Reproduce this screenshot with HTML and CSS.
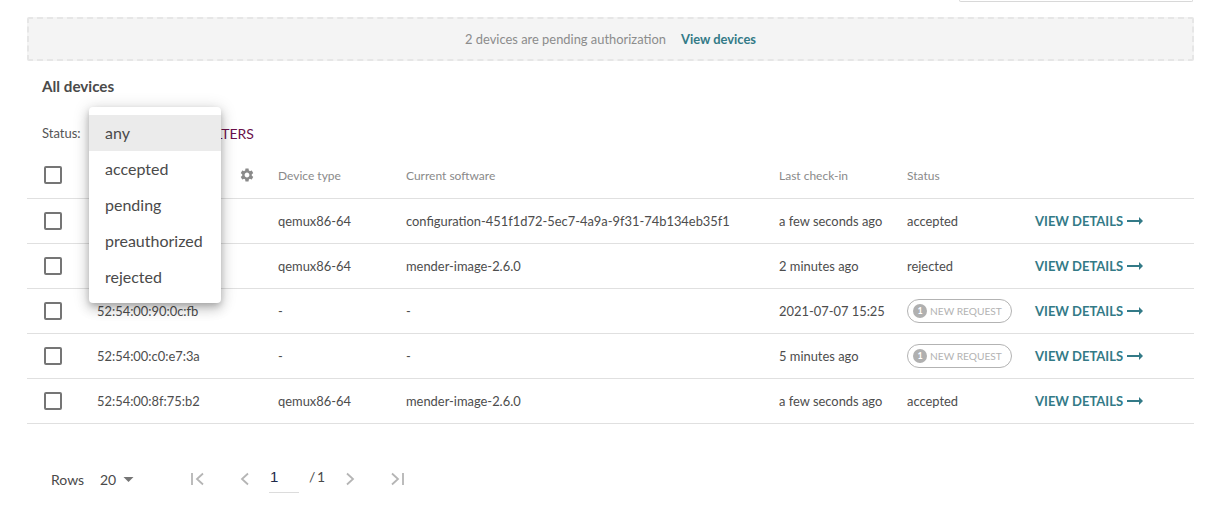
FILE: index.html
```html
<!DOCTYPE html>
<html lang="en">
<head>
  <title>Devices</title>
  <link rel="stylesheet" href="styles.css">
</head>
<body>
  <div class="page">
    <div class="search-row"><div class="search-box"></div></div>

    <div class="pending-banner">
      <span>2 devices are pending authorization</span>
      <a class="pending-link">View devices</a>
    </div>

    <h1 class="list-title">All devices</h1>

    <div class="filters">
      <span class="filters-label">Status:</span>
      <span class="filters-clear">CLEAR FILTERS</span>
    </div>

    <div class="device-table">
      <div class="row head">
        <span class="checkbox"></span>
        <span class="id-head">
          <svg class="gear" viewBox="0 0 24 24"><path d="M19.14 12.94c.04-.3.06-.61.06-.94 0-.32-.02-.64-.07-.94l2.03-1.58c.18-.14.23-.41.12-.61l-1.92-3.32c-.12-.22-.37-.29-.59-.22l-2.39.96c-.5-.38-1.03-.7-1.62-.94l-.36-2.54c-.04-.24-.24-.41-.48-.41h-3.84c-.24 0-.43.17-.47.41l-.36 2.54c-.59.24-1.13.57-1.62.94l-2.39-.96c-.22-.08-.47 0-.59.22L2.74 8.87c-.12.21-.08.47.12.61l2.03 1.58c-.05.3-.09.63-.09.94s.02.64.07.94l-2.03 1.58c-.18.14-.23.41-.12.61l1.92 3.32c.12.22.37.29.59.22l2.39-.96c.5.38 1.03.7 1.62.94l.36 2.54c.05.24.24.41.48.41h3.84c.24 0 .44-.17.47-.41l.36-2.54c.59-.24 1.13-.56 1.62-.94l2.39.96c.22.08.47 0 .59-.22l1.92-3.32c.12-.22.07-.47-.12-.61l-2.01-1.58zM12 15.6c-1.98 0-3.6-1.62-3.6-3.6s1.62-3.6 3.6-3.6 3.6 1.62 3.6 3.6-1.62 3.6-3.6 3.6z"/></svg>
        </span>
        <span>Device type</span>
        <span>Current software</span>
        <span>Last check-in</span>
        <span>Status</span>
        <span></span>
      </div>

      <div class="row">
        <span class="checkbox"></span>
        <span></span>
        <span>qemux86-64</span>
        <span>configuration-451f1d72-5ec7-4a9a-9f31-74b134eb35f1</span>
        <span>a few seconds ago</span>
        <span>accepted</span>
        <a class="details">VIEW DETAILS <svg class="arrow" viewBox="0 0 16 10"><path d="M0 4h12V1l4 4-4 4V6H0z"/></svg></a>
      </div>

      <div class="row">
        <span class="checkbox"></span>
        <span></span>
        <span>qemux86-64</span>
        <span>mender-image-2.6.0</span>
        <span>2 minutes ago</span>
        <span>rejected</span>
        <a class="details">VIEW DETAILS <svg class="arrow" viewBox="0 0 16 10"><path d="M0 4h12V1l4 4-4 4V6H0z"/></svg></a>
      </div>

      <div class="row">
        <span class="checkbox"></span>
        <span>52:54:00:90:0c:fb</span>
        <span>-</span>
        <span>-</span>
        <span>2021-07-07 15:25</span>
        <span class="request"><b>1</b>NEW REQUEST</span>
        <a class="details">VIEW DETAILS <svg class="arrow" viewBox="0 0 16 10"><path d="M0 4h12V1l4 4-4 4V6H0z"/></svg></a>
      </div>

      <div class="row">
        <span class="checkbox"></span>
        <span>52:54:00:c0:e7:3a</span>
        <span>-</span>
        <span>-</span>
        <span>5 minutes ago</span>
        <span class="request"><b>1</b>NEW REQUEST</span>
        <a class="details">VIEW DETAILS <svg class="arrow" viewBox="0 0 16 10"><path d="M0 4h12V1l4 4-4 4V6H0z"/></svg></a>
      </div>

      <div class="row">
        <span class="checkbox"></span>
        <span>52:54:00:8f:75:b2</span>
        <span>qemux86-64</span>
        <span>mender-image-2.6.0</span>
        <span>a few seconds ago</span>
        <span>accepted</span>
        <a class="details">VIEW DETAILS <svg class="arrow" viewBox="0 0 16 10"><path d="M0 4h12V1l4 4-4 4V6H0z"/></svg></a>
      </div>
    </div>

    <div class="pager">
      <span class="rows-label">Rows</span>
      <span class="rows-value">20</span>
      <svg class="caret" viewBox="0 0 10 5"><path d="M0 0h10L5 5z"/></svg>
      <svg class="page-icon first" viewBox="0 0 16 16"><path d="M2 2v12M13 2.5 7 8l6 5.5"/></svg>
      <svg class="page-icon prev" viewBox="0 0 16 16"><path d="M11 2.5 5 8l6 5.5"/></svg>
      <span class="page-input">1</span>
      <span class="page-total">/ 1</span>
      <svg class="page-icon next" viewBox="0 0 16 16"><path d="M5 2.5 11 8l-6 5.5"/></svg>
      <svg class="page-icon last" viewBox="0 0 16 16"><path d="M3 2.5 9 8l-6 5.5M14 2v12"/></svg>
    </div>

    <ul class="status-menu">
      <li class="selected">any</li>
      <li>accepted</li>
      <li>pending</li>
      <li>preauthorized</li>
      <li>rejected</li>
    </ul>
  </div>
</body>
</html>
```

FILE: styles.css
```css
* {
  box-sizing: border-box;
}

body {
  margin: 0;
  background: #fff;
  color: #4d4d4d;
  font-family: Lato, sans-serif;
  font-size: 12.9px;
}

.page {
  position: relative;
  height: 529px;
  padding: 0 17px 0 27px;
  overflow: hidden;
}

.search-row {
  display: flex;
  justify-content: flex-end;
  height: 17px;
}

.search-box {
  width: 234px;
  height: 2px;
  margin-right: 1px;
  border: 1px solid #d8d8d8;
  border-top: 0;
  border-radius: 0 0 4px 4px;
}

.pending-banner {
  display: flex;
  justify-content: center;
  align-items: center;
  gap: 15px;
  height: 44px;
  background: #f4f4f4;
  border: 2px dashed #e6e6e6;
  border-radius: 2px;
  color: #8c8c8c;
}

.pending-link {
  color: #337a87;
  font-weight: 700;
}

.list-title {
  margin: 16px 0 0 15px;
  font-size: 15.2px;
  line-height: 18px;
  font-weight: 700;
  color: #4a4a4a;
}

.filters {
  display: flex;
  align-items: center;
  height: 20px;
  margin: 28px 0 0 15px;
}

.filters-label {
  width: 115px;
  font-size: 13px;
  color: #555;
}

.filters-clear {
  font-size: 14px;
  color: #6a0f4a;
}

.device-table {
  margin-top: 11px;
}

.row {
  display: grid;
  grid-template-columns: 70px 181px 128px 373px 128px 128px 1fr;
  align-items: center;
  height: 45px;
  border-bottom: 1px solid #e0e0e0;
}

.row.head {
  padding-bottom: 2px;
  font-size: 12px;
  color: #8a8a8a;
}

.checkbox {
  display: block;
  width: 18px;
  height: 18px;
  margin-left: 17px;
  border: 2px solid #757575;
  border-radius: 2px;
}

.id-head {
  display: flex;
  justify-content: flex-end;
  padding-right: 23px;
}

.gear {
  width: 16px;
  height: 16px;
  fill: #8a8a8a;
}

.details {
  display: flex;
  align-items: center;
  gap: 4px;
  font-size: 13px;
  font-weight: 700;
  color: #337a87;
}

.arrow {
  width: 16px;
  height: 10px;
  fill: #337a87;
}

.request {
  display: inline-flex;
  align-items: center;
  width: 105px;
  height: 24px;
  padding-left: 5px;
  border: 1px solid #b3b3b3;
  border-radius: 12px;
  font-size: 10.2px;
  color: #b3b3b3;
}

.request b {
  width: 14px;
  height: 14px;
  margin-right: 3px;
  border-radius: 50%;
  background: #b0b0b0;
  color: #fff;
  font-size: 9px;
  line-height: 14px;
  text-align: center;
}

.pager {
  display: flex;
  align-items: center;
  height: 30px;
  margin: 40px 0 0 24px;
  font-size: 14px;
  color: #4a4a4a;
}

.rows-label {
  width: 49px;
}

.rows-value {
  width: 23px;
}

.caret {
  width: 11px;
  height: 5px;
  fill: #757575;
  margin-right: 56px;
}

.page-icon {
  width: 16px;
  height: 16px;
  fill: none;
  stroke: #b5b5b5;
  stroke-width: 1.8;
}

.first {
  margin-right: 31px;
}

.prev {
  margin-right: 16px;
}

.page-input {
  width: 30px;
  height: 27px;
  border-bottom: 1px solid #dcdcdc;
  color: #1e2a4a;
  font-family: "Liberation Sans", sans-serif;
  font-size: 15px;
  line-height: 21px;
  padding-left: 1px;
}

.page-total {
  width: 43px;
  padding: 0 0 5px 10px;
  word-spacing: -2px;
  color: #4a4a4a;
}

.next {
  margin-right: 31px;
}

.status-menu {
  position: absolute;
  top: 107px;
  left: 89px;
  width: 132px;
  margin: 0;
  padding: 8px 0;
  list-style: none;
  background: #fff;
  border-radius: 4px;
  box-shadow: 0 3px 6px -1px rgba(0,0,0,0.2), 0 6px 12px 1px rgba(0,0,0,0.14), 0 2px 16px 2px rgba(0,0,0,0.12);
}

.status-menu li {
  height: 36px;
  padding-left: 16px;
  font-size: 16px;
  line-height: 36px;
  color: #4a4a4a;
}

.status-menu .selected {
  background: #ebebeb;
}
```
